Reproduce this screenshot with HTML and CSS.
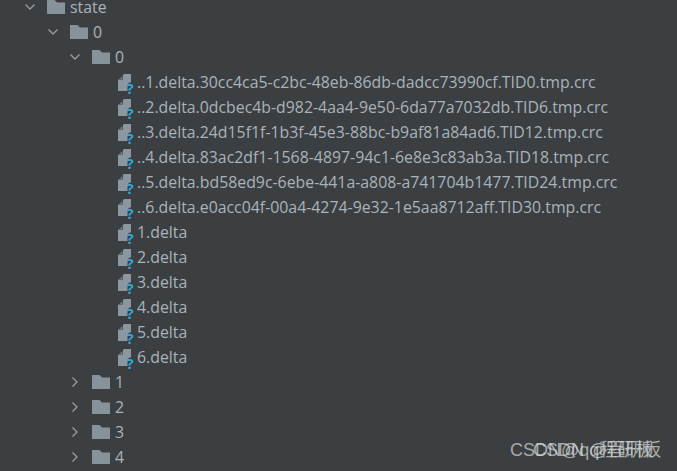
FILE: index.html
```
<!DOCTYPE html>
<html lang="en">
<head>
<meta charset="utf-8">
<title>Tree</title>
<link rel="stylesheet" href="styles.css">
</head>
<body>
<svg class="defs" width="0" height="0" aria-hidden="true">
  <symbol id="open" viewBox="0 0 10 6"><path d="M.5.500l4.500 4.500 4.500-4.500" fill="none" stroke="#9a9da0" stroke-width="1.300"/></symbol>
  <symbol id="closed" viewBox="0 0 6 10"><path d="M.5.500l4.500 4.500-4.500 4.500" fill="none" stroke="#9a9da0" stroke-width="1.300"/></symbol>
  <symbol id="folder" viewBox="0 0 18 14"><path d="M0 0h7.500l2.500 2.500h8v11.500h-18z" fill="#87939a"/></symbol>
  <symbol id="file" viewBox="0 0 18 20"><path d="M6 0h7v8.500h-1.500l-2 2v6.500h-9.500v-11z" fill="#8b979e"/><path d="M5 .8v4.700h-4.700z" fill="#3c3f41"/><path d="M4.300 2.500v2.300h-2.300z" fill="#8b979e"/><text x="8.500" y="19.800" class="q">?</text></symbol>
</svg>
<main class="tree">
  <div class="row d0"><svg class="chev-o"><use href="#open"/></svg><svg class="folder"><use href="#folder"/></svg><span>state</span></div>
  <div class="row d1"><svg class="chev-o"><use href="#open"/></svg><svg class="folder"><use href="#folder"/></svg><span>0</span></div>
  <div class="row d2"><svg class="chev-o"><use href="#open"/></svg><svg class="folder"><use href="#folder"/></svg><span>0</span></div>
  <div class="row f"><svg class="file"><use href="#file"/></svg><span>..1.delta.30cc4ca5-c2bc-48eb-86db-dadcc73990cf.TID0.tmp.crc</span></div>
  <div class="row f"><svg class="file"><use href="#file"/></svg><span>..2.delta.0dcbec4b-d982-4aa4-9e50-6da77a7032db.TID6.tmp.crc</span></div>
  <div class="row f"><svg class="file"><use href="#file"/></svg><span>..3.delta.24d15f1f-1b3f-45e3-88bc-b9af81a84ad6.TID12.tmp.crc</span></div>
  <div class="row f"><svg class="file"><use href="#file"/></svg><span>..4.delta.83ac2df1-1568-4897-94c1-6e8e3c83ab3a.TID18.tmp.crc</span></div>
  <div class="row f"><svg class="file"><use href="#file"/></svg><span>..5.delta.bd58ed9c-6ebe-441a-a808-a741704b1477.TID24.tmp.crc</span></div>
  <div class="row f"><svg class="file"><use href="#file"/></svg><span>..6.delta.e0acc04f-00a4-4274-9e32-1e5aa8712aff.TID30.tmp.crc</span></div>
  <div class="row f"><svg class="file"><use href="#file"/></svg><span>1.delta</span></div>
  <div class="row f"><svg class="file"><use href="#file"/></svg><span>2.delta</span></div>
  <div class="row f"><svg class="file"><use href="#file"/></svg><span>3.delta</span></div>
  <div class="row f"><svg class="file"><use href="#file"/></svg><span>4.delta</span></div>
  <div class="row f"><svg class="file"><use href="#file"/></svg><span>5.delta</span></div>
  <div class="row f"><svg class="file"><use href="#file"/></svg><span>6.delta</span></div>
  <div class="row d2"><svg class="chev-c"><use href="#closed"/></svg><svg class="folder"><use href="#folder"/></svg><span>1</span></div>
  <div class="row d2"><svg class="chev-c"><use href="#closed"/></svg><svg class="folder"><use href="#folder"/></svg><span>2</span></div>
  <div class="row d2"><svg class="chev-c"><use href="#closed"/></svg><svg class="folder"><use href="#folder"/></svg><span>3</span></div>
  <div class="row d2"><svg class="chev-c"><use href="#closed"/></svg><svg class="folder"><use href="#folder"/></svg><span>4</span></div>
</main>
<div class="mark mark-a">CSDN@qq程研板</div>
<div class="mark mark-b">CSDN @程研板</div>
</body>
</html>
```
FILE: styles.css
```
html, body {
  margin: 0;
  height: 100%;
  overflow: hidden;
  background: #3c3f41;
}
body {
  position: relative;
  font-family: "Open Sans", "Noto Sans CJK SC", sans-serif;
}
.defs { position: absolute; }
.tree {
  margin-top: -6px;
  color: #a9b3bb;
  font-size: 15.85px;
}
.row {
  display: flex;
  align-items: center;
  height: 25px;
  white-space: nowrap;
}
.d0 { padding-left: 25px; }
.d1 { padding-left: 48px; }
.d2 { padding-left: 70px; }
.f  { padding-left: 118px; }
.chev-o { width: 10px; height: 6px; margin-right: 12px; margin-top: 1px; }
.chev-c { width: 6px; height: 10px; margin: 1px 14px 0 2px; }
.folder { width: 18px; height: 14px; margin-right: 5px; margin-top: 1px; }
.file { width: 18px; height: 20px; margin-right: 1px; margin-top: 5px; }
.q {
  font: bold 15px "Open Sans", sans-serif;
  fill: #2fa9dc;
}
.mark {
  position: absolute;
  top: 440px;
  font-family: "Liberation Sans", "Noto Sans CJK SC", sans-serif;
  font-size: 18px;
  line-height: 20px;
  color: rgba(215, 218, 220, 0.7);
  white-space: nowrap;
}
.mark-a { left: 510px; }
.mark-b { left: 533px; }
```
